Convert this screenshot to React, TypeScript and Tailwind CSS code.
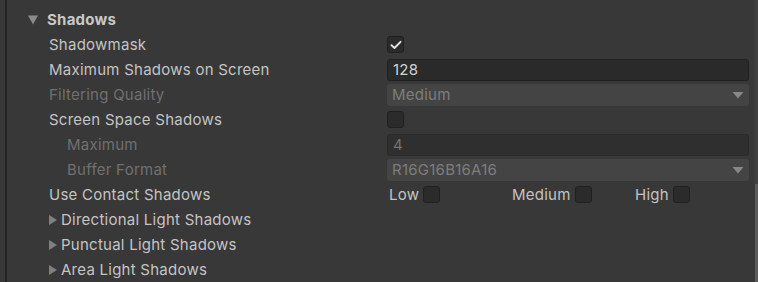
import React from "react";

const font = { fontFamily: "Inter, 'Noto Sans', sans-serif" };

function Check({ checked }: { checked?: boolean }) {
  return (
    <div className="w-[17px] h-[17px] rounded-[3px] bg-[#2b2b2b] border border-[#202020] flex items-center justify-center shrink-0">
      {checked && (
        <svg width="12" height="10" viewBox="0 0 12 10">
          <path d="M1.5 5.2 L4.5 8 L10.5 1.8" fill="none" stroke="#e2e2e2" strokeWidth="1.9" strokeLinecap="round" strokeLinejoin="round" />
        </svg>
      )}
    </div>
  );
}

function Field({ value, disabled }: { value: string; disabled?: boolean }) {
  return (
    <div
      className={`h-[22px] w-[362px] rounded-[3px] border flex items-center px-[5px] ${
        disabled ? "bg-[#2f2f2f] border-[#2a2a2a] text-[#747474]" : "bg-[#2a2a2a] border-[#202020] text-[#d2d2d2]"
      }`}
    >
      {value}
    </div>
  );
}

function Dropdown({ value }: { value: string }) {
  return (
    <div className="h-[22px] w-[362px] rounded-[3px] bg-[#444444] flex items-center justify-between pl-[5px] pr-[5px] text-[#7d7d7d]">
      <span>{value}</span>
      <svg width="12" height="8" viewBox="0 0 12 8">
        <path d="M0.5 1 L11.5 1 L6 7.5 Z" fill="#878787" />
      </svg>
    </div>
  );
}

function Row({
  label,
  indent,
  disabled,
  children,
}: {
  label: string;
  indent?: boolean;
  disabled?: boolean;
  children?: React.ReactNode;
}) {
  return (
    <div className="h-[25px] flex items-center">
      <div
        className={`w-[387px] shrink-0 ${indent ? "pl-[67px]" : "pl-[49px]"} ${
          disabled ? "text-[#707070]" : "text-[#c4c4c4]"
        }`}
      >
        {label}
      </div>
      {children}
    </div>
  );
}

function Foldout({ label }: { label: string }) {
  return (
    <div className="h-[25px] flex items-center pl-[49px] text-[#c4c4c4]">
      <svg width="8" height="10" viewBox="0 0 8 10" className="mr-[4px]">
        <path d="M0 0 L8 5 L0 10 Z" fill="#808080" />
      </svg>
      {label}
    </div>
  );
}

export default function App() {
  return (
    <div
      className="w-[758px] h-[282px] bg-[#383838] flex text-[15px] tracking-[0.25px] leading-none overflow-hidden"
      style={font}
    >
      <div className="w-[5px] shrink-0" />
      <div className="w-[2px] shrink-0 bg-[#232323]" />
      <div className="flex-1 pt-[7px]">
        <div className="h-[25px] flex items-center">
          <svg width="10" height="10" viewBox="0 0 10 10" className="ml-[21px] mr-[9px]">
            <path d="M0 0.5 L10 0.5 L5 9.5 Z" fill="#8a8a8a" />
          </svg>
          <span className="font-bold text-[#c8c8c8]">Shadows</span>
        </div>
        <div className="-ml-[7px]">
          <Row label="Shadowmask">
            <Check checked />
          </Row>
          <Row label="Maximum Shadows on Screen">
            <Field value="128" />
          </Row>
          <Row label="Filtering Quality" disabled>
            <Dropdown value="Medium" />
          </Row>
          <Row label="Screen Space Shadows">
            <Check />
          </Row>
          <Row label="Maximum" indent disabled>
            <Field value="4" disabled />
          </Row>
          <Row label="Buffer Format" indent disabled>
            <Dropdown value="R16G16B16A16" />
          </Row>
          <Row label="Use Contact Shadows">
            <div className="flex text-[#c4c4c4]">
              <div className="w-[123px] flex items-center gap-[4px] pl-[2px]">
                Low <Check />
              </div>
              <div className="w-[123px] flex items-center gap-[4px] pl-[2px]">
                Medium <Check />
              </div>
              <div className="w-[116px] flex items-center gap-[4px] pl-[2px]">
                High <Check />
              </div>
            </div>
          </Row>
          <Foldout label="Directional Light Shadows" />
          <Foldout label="Punctual Light Shadows" />
          <Foldout label="Area Light Shadows" />
        </div>
      </div>
      <div className="w-[3px] shrink-0 flex flex-col">
        <div className="h-[184px] bg-[#3f3f3f]" />
        <div className="flex-1 bg-[#5c5c5c]" />
      </div>
    </div>
  );
}
